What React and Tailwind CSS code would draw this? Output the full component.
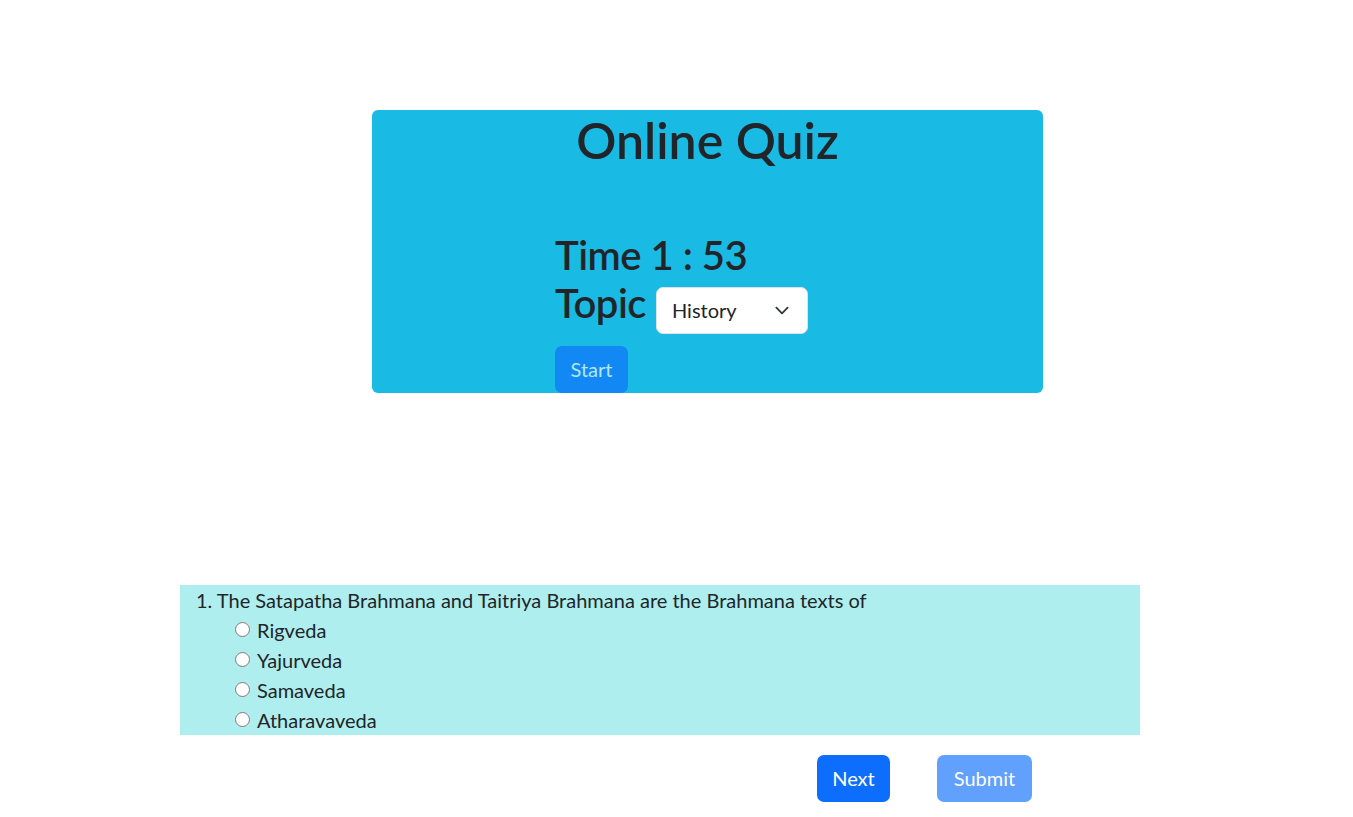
import React from 'react';

const options = ['Rigveda', 'Yajurveda', 'Samaveda', 'Atharavaveda'];

function TopicSelect() {
  return (
    <div className="ml-[10px] flex h-[47px] w-[152px] items-center justify-between rounded-[7px] border border-[#dee2e6] bg-white pl-[15px] pr-[15px] text-[20px] leading-[30px] font-normal text-[#212529]">
      <span>History</span>
      <svg width="20" height="15" viewBox="0 0 16 16" fill="none">
        <path d="m2 5 6 6 6-6" stroke="#343a40" strokeWidth="2" strokeLinecap="round" strokeLinejoin="round" />
      </svg>
    </div>
  );
}

export default function App() {
  return (
    <div className="min-h-screen bg-white pb-[15px] font-['Lato','Open_Sans',sans-serif] text-[#212529]">
      <div className="pl-[372px] pt-[110px]">
        <div className="w-[671px] rounded-[6px] bg-[#19bbe4]">
          <h1 className="text-center text-[50px] font-semibold leading-[1.2]">Online Quiz</h1>
          <div className="mt-[61px] pl-[183px]">
            <h2 className="text-[40px] font-semibold leading-[1.2] tracking-[-0.5px]">Time 1 : 53</h2>
            <div className="flex items-baseline">
              <h2 className="text-[40px] font-semibold leading-[1.2] tracking-[-0.5px]">Topic</h2>
              <TopicSelect />
            </div>
            <button
              disabled
              className="mt-[12px] h-[47px] w-[73px] rounded-[7px] bg-[#0d6efd] text-[20px] leading-[30px] text-white opacity-65"
            >
              Start
            </button>
          </div>
        </div>
      </div>

      <div className="ml-[180px] mt-[192px] w-[960px] bg-[#afeeee] text-[20px] leading-[30px]">
        <div className="pl-[16px]">1. The Satapatha Brahmana and Taitriya Brahmana are the Brahmana texts of</div>
        {options.map((o) => (
          <label key={o} className="flex items-center pl-[55px]">
            <input type="radio" name="q1" className="m-0 h-[15px] w-[15px]" />
            <span className="ml-[7px]">{o}</span>
          </label>
        ))}
      </div>

      <div className="ml-[817px] mt-[20px] flex gap-[47px]">
        <button className="h-[47px] w-[73px] rounded-[7px] bg-[#0d6efd] text-[20px] leading-[30px] text-white">Next</button>
        <button disabled className="h-[47px] w-[95px] rounded-[7px] bg-[#0d6efd] text-[20px] leading-[30px] text-white opacity-65">
          Submit
        </button>
      </div>
    </div>
  );
}
